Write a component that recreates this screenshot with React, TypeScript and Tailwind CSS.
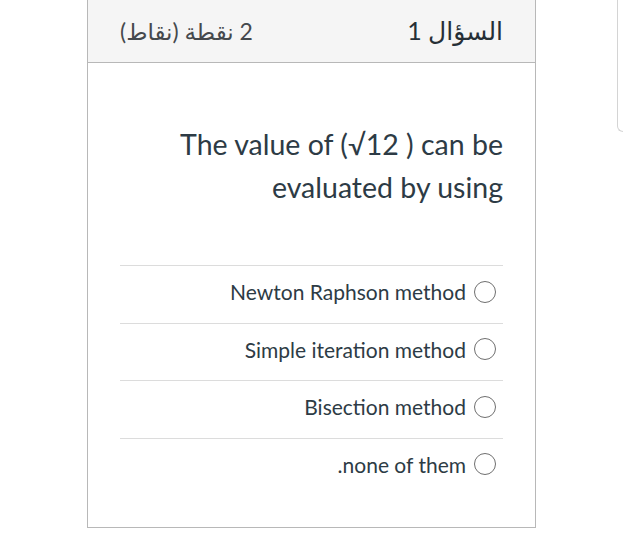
const options = [
  "Newton Raphson method",
  "Simple iteration method",
  "Bisection method",
  ".none of them",
];

const Radio = () => (
  <span className="inline-block h-[22px] w-[22px] shrink-0 rounded-full border border-[#6f6f6f] bg-white" />
);

export default function App() {
  return (
    <div
      className="relative h-[559px] w-[623px] overflow-hidden bg-white text-[#2d3b45]"
      style={{ fontFamily: "Lato, 'Noto Sans', 'DejaVu Sans', sans-serif" }}
    >
      <div className="absolute right-0 top-0 h-[132px] w-[6px] rounded-bl-[8px] border-b border-l border-[#d4d4d4]" />

      <div className="ml-[87px] mt-[-1px] w-[449px] border border-[#b8b8b8]">
        <div className="flex h-[63px] items-center justify-between border-b border-[#b8b8b8] bg-[#f5f5f5] px-8">
          <span dir="rtl" className="text-[23px] text-[#45494d]">
            2 نقطة (نقاط)
          </span>
          <span dir="rtl" className="text-[25px] text-[#262f36]">
            السؤال 1
          </span>
        </div>

        <div className="px-8 pb-[32px] pt-[60px]">
          <p className="pl-[40px] text-right text-[28.5px] leading-[43px] text-[#2d3b45]">
            The value of (√12 ) can be evaluated by using
          </p>

          <div className="mt-[56px]">
            {options.map((o) => (
              <div
                key={o}
                className="flex h-[57.5px] items-center justify-end gap-2 border-t border-[#dcdcdc] pb-[5px] pr-[7px]"
              >
                <span className="text-[21px] text-[#2d3b45]">{o}</span>
                <Radio />
              </div>
            ))}
          </div>
        </div>
      </div>
    </div>
  );
}
